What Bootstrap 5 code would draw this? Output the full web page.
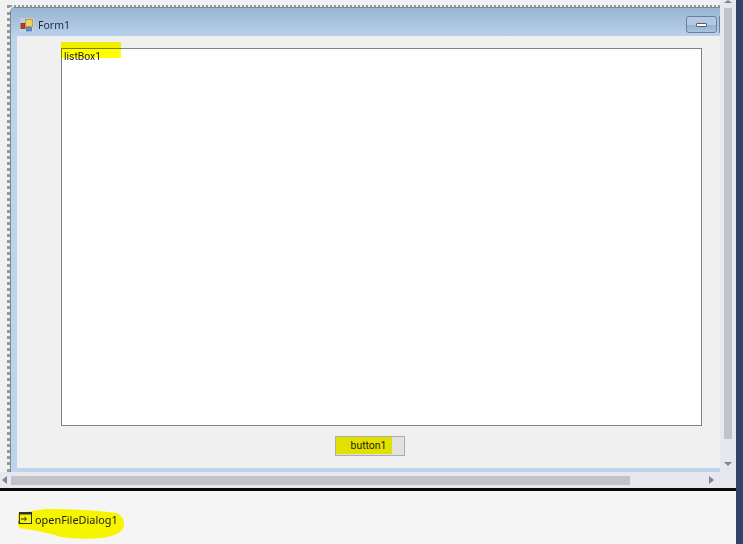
<!DOCTYPE html>
<html lang="en">
<head>
<meta charset="utf-8">
<title>Form1</title>
<link rel="stylesheet" href="https://cdn.jsdelivr.net/npm/bootstrap@5.3.0/dist/css/bootstrap.min.css">
<style>
html,body{margin:0;height:100%;overflow:hidden;background:#f5f5f5}
body{font-family:"Noto Sans","Open Sans",sans-serif;font-size:11px;color:#222}
.ide{width:743px;height:544px}
.ide-main{width:736px}
.edge{width:7px;background:#2f4468}
.designer{height:488px;background:#e6e7ef}
.canvas-col{width:720px}
.canvas{height:472px;background:#f1f1f1;padding:5px 0 0 7px;overflow:hidden}
.selframe{height:467px;border-top:2px dotted #989898;border-left:3px dotted #989898}
.winform{height:465px;width:710px;background:#bcd4ec;border-radius:5px 0 0 0;padding:0 0 4px 6px;border-top:1px solid #7d8794;border-left:1px solid #7d8794}
.titlebar{height:28px;background:linear-gradient(#99b4d1,#b9d1ea);margin:0 0 0 -6px;padding:5px 0 0 9px}
.formicon{width:14px;height:14px;flex:none}
.formtitle{font-size:10.5px;color:#1c2a3a;margin:2px 0 0 4px}
.minbtn{width:31px;height:17px;border:1px solid #6c7f98;border-radius:3px;background:linear-gradient(#b3c9e2 50%,#93b0d0 50%,#a9c3de)}
.minbar{width:11px;height:4px;background:#fff;border:1px solid #555d6b;border-radius:1px}
.nextbtn{width:1px;height:17px;margin-left:2px;background:#6c7f98}
.client{background:#f0f0f0;height:432px;padding:12px 0 0 44px}
.lbox{position:relative;width:641px;height:378px;background:#fff;border:1px solid #7e8186;padding:1px 2px;line-height:13px;font-family:Roboto,sans-serif;font-size:10.4px;color:#222}
.winbtn{position:relative;width:70px;height:20px;margin:10px 0 0 274px;border:1px solid #adadad;background:#e1e1e1;font-family:Roboto,sans-serif;font-size:10.4px;color:#222;padding:0 3px 0 0;line-height:18px}
.hmark{position:absolute;mix-blend-mode:multiply;background:#ffff00}
.mark-list{left:-1px;top:-7px;width:60px;height:16px}
.mark-btn{left:0;top:0;width:56px;height:17px}
.hbar{height:16px;background:#e6e7ef}
.tri{width:0;height:0;border-style:solid;flex:none}
.tri-l{margin-left:2px;border-width:4.5px 5px 4.5px 0;border-color:transparent #7e8494 transparent transparent}
.tri-r{margin-left:79px;border-width:4.5px 0 4.5px 5px;border-color:transparent transparent transparent #7e8494}
.hthumb{width:619px;height:9px;margin-left:4px;background:#c2c3c9}
.vbar{width:16px;background:#e6e7ef}
.vthumb{width:8px;height:431px;margin-top:5px;background:#c2c3c9}
.tri-u{border-width:0 4px 3px 4px;border-color:transparent transparent #7e8494 transparent}
.tri-d{margin-top:23px;border-width:4px 4px 0 4px;border-color:#7e8494 transparent transparent transparent}
.rule{height:3px;background:#0a0a0a}
.tray{position:relative;height:53px;background:#f5f5f5;padding:21px 0 0 18px}
.trayblob{position:absolute;left:17px;top:17px;width:108px;height:32px;mix-blend-mode:multiply}
.trayicon{position:relative;width:14px;height:13px;flex:none}
.traytext{position:relative;font-size:10.9px;margin:1px 0 0 3px;color:#222;line-height:14px}
</style>
</head>
<body>
<div class="ide d-flex">
  <div class="ide-main d-flex flex-column">
    <div class="designer d-flex">
      <div class="canvas-col d-flex flex-column">
        <div class="canvas">
          <div class="selframe">
            <div class="winform">
              <div class="titlebar d-flex align-items-center">
                <svg class="formicon" viewBox="0 0 14 14" aria-hidden="true">
                  <rect width="14" height="14" fill="#c9d2db" opacity=".7"/>
                  <rect x="1" y="5.5" width="4" height="5" fill="#c0392b" stroke="#7a1f1a" stroke-width=".7"/>
                  <rect x="5.5" y="1.5" width="7" height="7" fill="#f5cf5c" stroke="#c08a20" stroke-width=".8"/>
                  <rect x="6.5" y="9.5" width="5" height="3.5" fill="#5b8fd6" stroke="#3b67a8" stroke-width=".6"/>
                </svg>
                <span class="formtitle">Form1</span>
                <div class="minbtn ms-auto d-flex align-items-center justify-content-center"><div class="minbar"></div></div>
                <div class="nextbtn"></div>
              </div>
              <div class="client">
                <div class="lbox">listBox1<span class="hmark mark-list"></span></div>
                <button type="button" class="winbtn d-block">button1<span class="hmark mark-btn"></span></button>
              </div>
            </div>
          </div>
        </div>
        <div class="hbar d-flex align-items-center">
          <span class="tri tri-l"></span>
          <div class="hthumb"></div>
          <span class="tri tri-r"></span>
        </div>
      </div>
      <div class="vbar d-flex flex-column align-items-center">
        <span class="tri tri-u"></span>
        <div class="vthumb"></div>
        <span class="tri tri-d"></span>
      </div>
    </div>
    <div class="rule"></div>
    <div class="tray d-flex align-items-start">
      <svg class="trayblob" viewBox="0 0 108 32" aria-hidden="true"><path d="M1 5 L28 1 Q70 1 100 5 Q108 9 107 18 Q105 27 85 30 Q62 32 44 29 Q30 24 2 20 Q0 12 1 5Z" fill="#ffff00"/></svg>
      <svg class="trayicon" viewBox="0 0 14 13" aria-hidden="true">
        <rect x="1.5" y=".5" width="12" height="11" fill="none" stroke="#333" stroke-width="1"/>
        <rect x="1.5" y=".5" width="12" height="2" fill="#333"/>
        <path d="M3 7H8M6.5 5.2L8.5 7L6.5 8.8M1 9V11.5H5" fill="none" stroke="#222" stroke-width="1"/>
      </svg>
      <span class="traytext">openFileDialog1</span>
    </div>
  </div>
  <div class="edge"></div>
</div>
<script src="https://cdn.jsdelivr.net/npm/bootstrap@5.3.0/dist/js/bootstrap.bundle.min.js"></script>
</body>
</html>
